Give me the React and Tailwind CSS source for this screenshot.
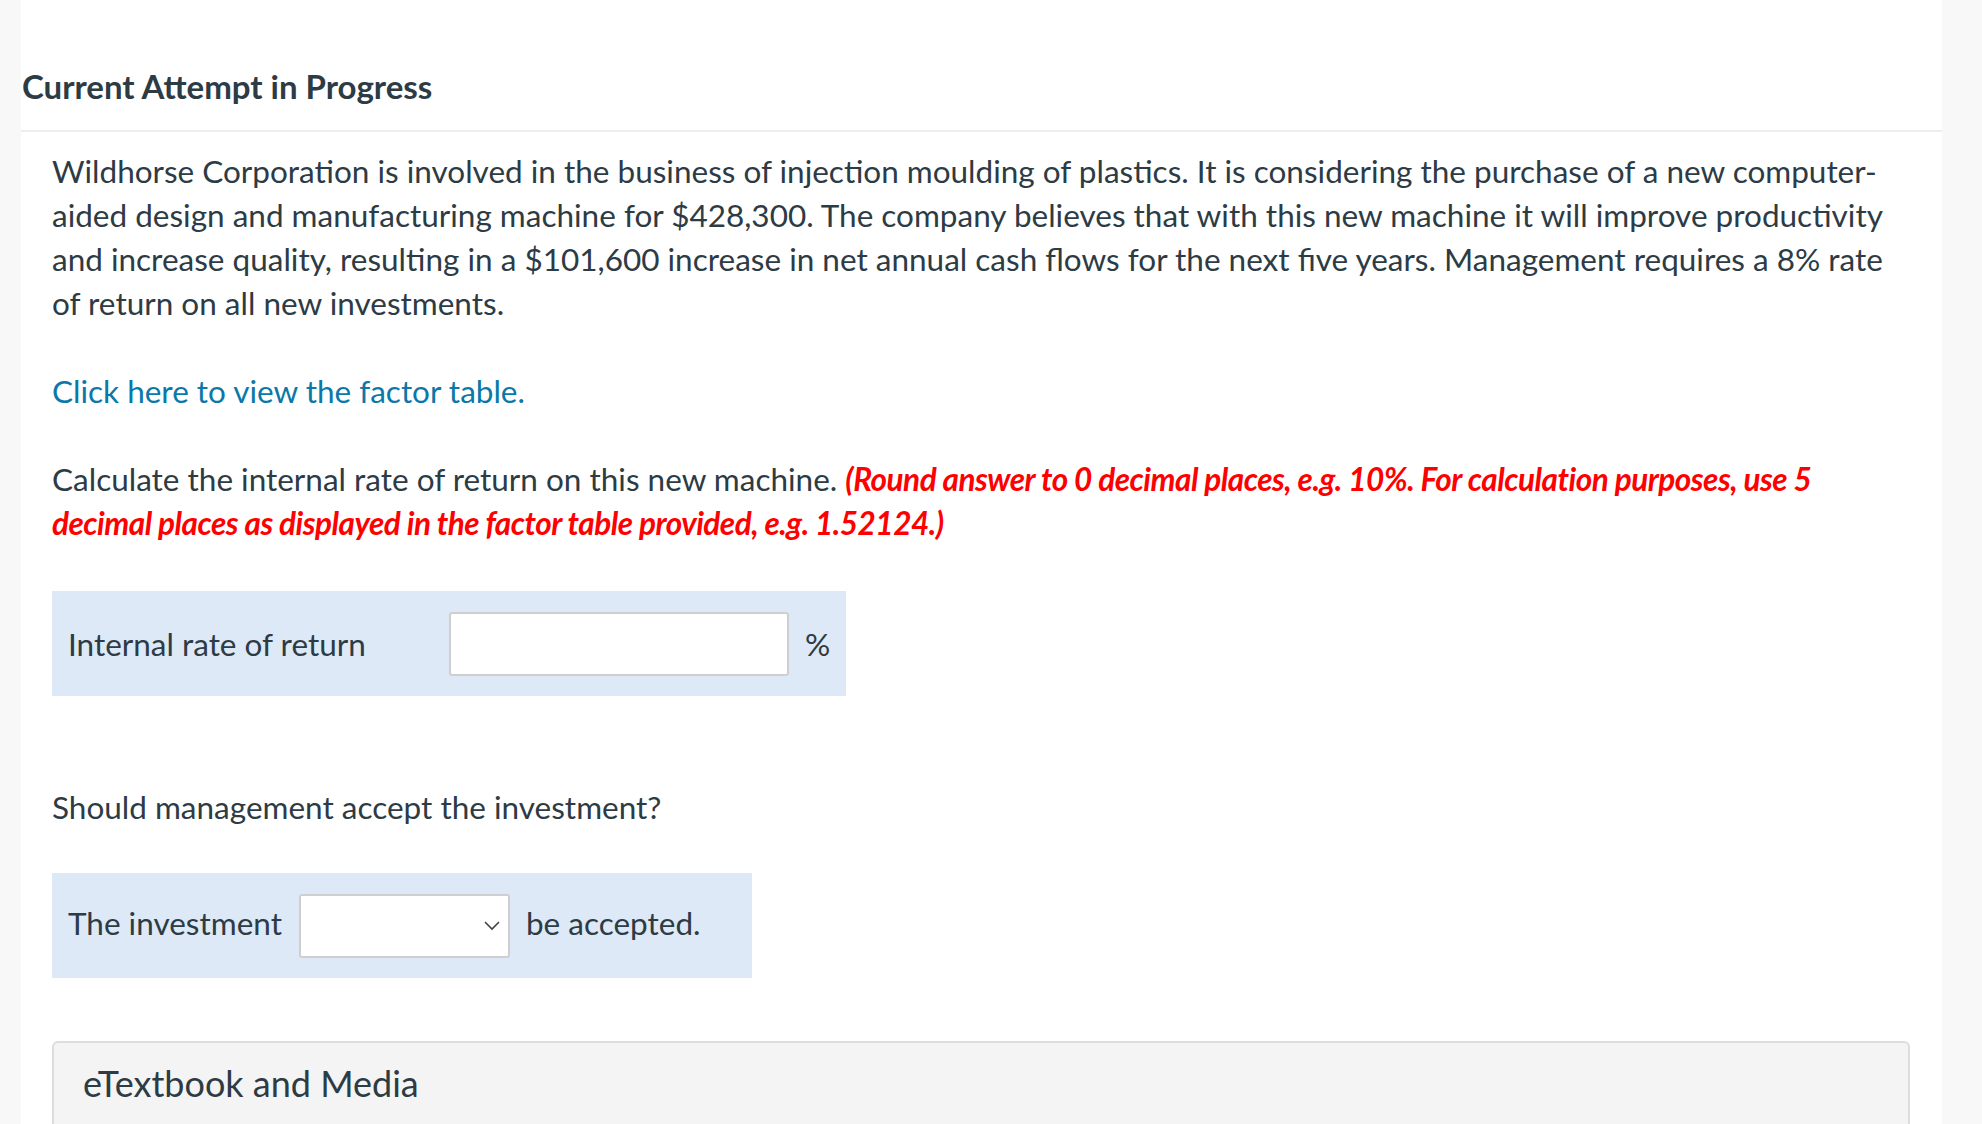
import React from 'react';

export default function App() {
  return (
    <div className="min-h-screen bg-[#f8f8f8] font-['Lato','Open_Sans',sans-serif] text-[#2d3b45]">
      <div className="ml-[21px] w-[1921px] min-h-[1124px] bg-white">
        <div className="border-b-2 border-[#eeeeee] pl-px pt-[66px] pb-[24px]">
          <h2 className="text-[33px] font-bold leading-[40px]">Current Attempt in Progress</h2>
        </div>

        <div className="px-[31px] pt-[17px] pb-6 text-[31.5px] leading-[44px]">
          <p>
            Wildhorse Corporation is involved in the business of injection moulding of plastics. It is considering the purchase of a new computer-aided design and manufacturing machine for $428,300. The company believes that with this new machine it will improve productivity and increase quality, resulting in a $101,600 increase in net annual cash flows for the next five years. Management requires a 8% rate of return on all new investments.
          </p>

          <p className="mt-[44px]">
            <a className="text-[#0a78a8] cursor-pointer">Click here to view the factor table.</a>
          </p>

          <p className="mt-[44px]">
            Calculate the internal rate of return on this new machine.{' '}
            <span className="font-bold italic text-[#ff0000] tracking-[-0.5px]">
              (Round answer to 0 decimal places, e.g. 10%. For calculation purposes, use 5 decimal places as displayed in the factor table provided, e.g. 1.52124.)
            </span>
          </p>

          <div className="mt-[46px] flex h-[105px] w-[794px] items-center bg-[#dde9f7] pl-4">
            <span className="w-[381px]">Internal rate of return</span>
            <input
              type="text"
              className="h-[64px] w-[340px] rounded-[3px] border-2 border-[#cfcfcf] bg-white outline-none"
            />
            <span className="ml-4">%</span>
          </div>

          <p className="mt-[89px]">Should management accept the investment?</p>

          <div className="mt-[44px] flex h-[105px] w-[700px] items-center bg-[#dde9f7] pl-4 pb-[6px]">
            <span>The investment</span>
            <div className="relative ml-[17px] mt-[6px] h-[64px] w-[211px] rounded-[3px] border-2 border-[#cfcfcf] bg-white">
              <svg
                className="absolute right-[7px] top-[24px]"
                width="18"
                height="11"
                viewBox="0 0 18 11"
                fill="none"
                stroke="#444"
                strokeWidth="1.6"
              >
                <path d="M2 2 L9 9 L16 2" />
              </svg>
            </div>
            <span className="ml-[16px]">be accepted.</span>
          </div>

          <div className="mt-[63px] h-[90px] w-[1858px] rounded-t-[6px] border-2 border-b-0 border-[#dddddd] bg-[#f4f4f4] pl-[29px] pt-[18px]">
            <span className="text-[36px] leading-[44px]">eTextbook and Media</span>
          </div>
        </div>
      </div>
    </div>
  );
}
